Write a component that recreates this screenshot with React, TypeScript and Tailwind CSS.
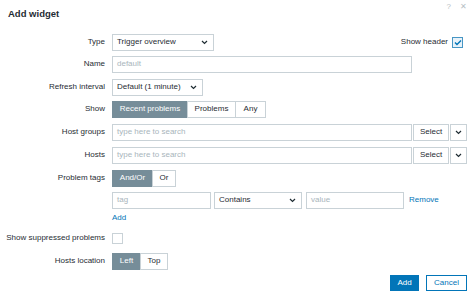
import React from "react";

const Chevron = () => (
  <svg width="7" height="5" viewBox="0 0 7 5" className="shrink-0">
    <polyline points="1,1 3.5,3.5 6,1" fill="none" stroke="#1f2c33" strokeWidth="1.2" />
  </svg>
);

function Select({ value, width }: { value: string; width: string }) {
  return (
    <div className={`${width} h-[17px] border border-[#c9d2d7] bg-white flex items-center justify-between pl-[4px] pr-[5px]`}>
      <span>{value}</span>
      <Chevron />
    </div>
  );
}

function Input({ placeholder, width }: { placeholder: string; width: string }) {
  return (
    <div className={`${width} h-[17px] border border-[#c9d2d7] bg-white flex items-center pl-[4px] text-[#a9b5bc]`}>
      {placeholder}
    </div>
  );
}

function Segmented({ items }: { items: { label: string; w: string; active?: boolean }[] }) {
  return (
    <div className="flex h-[17px]">
      {items.map((it, i) => (
        <div
          key={i}
          className={`${it.w} h-full flex items-center justify-center border ${
            it.active ? "bg-[#768d99] border-[#768d99] text-white" : "bg-white border-[#c9d2d7] -ml-px"
          }`}
        >
          {it.label}
        </div>
      ))}
    </div>
  );
}

function Row({ label, children, className = "" }: { label: string; children?: React.ReactNode; className?: string }) {
  return (
    <div className={`flex items-center ${className}`}>
      <div className="w-[105px] text-right shrink-0">{label}</div>
      <div className="ml-[7px] flex items-center flex-1">{children}</div>
    </div>
  );
}

function MultiSelect() {
  return (
    <>
      <Input placeholder="type here to search" width="w-[300px]" />
      <div className="ml-px w-[36px] h-[17px] border border-[#c9d2d7] flex items-center justify-center">Select</div>
      <div className="ml-px w-[17px] h-[17px] border border-[#c9d2d7] flex items-center justify-center">
        <Chevron />
      </div>
    </>
  );
}

export default function App() {
  return (
    <div
      className="w-[474px] h-[297px] bg-white text-[#1f2c33] text-[8px] leading-none relative overflow-hidden"
      style={{ fontFamily: '"Liberation Sans", Arial, sans-serif' }}
    >
      <div className="flex items-start justify-between pl-[8px] pr-[7px]">
        <div className="pt-[9px] text-[9.5px] font-bold text-[#1f2c33]">Add widget</div>
        <div className="flex gap-[9px] pt-[3px] text-[8px] text-[#b7c0c5]">
          <span>?</span>
          <span>✕</span>
        </div>
      </div>

      <div className="flex flex-col pr-[8px] mt-[15px]">
        <Row label="Type">
          <Select value="Trigger overview" width="w-[102px]" />
          <div className="ml-auto flex items-center gap-[4px] mr-[3px]">
            <span>Show header</span>
            <div className="w-[11px] h-[11px] border border-[#4796c4] bg-[#e8f2f9] flex items-center justify-center">
              <svg width="8" height="7" viewBox="0 0 8 7">
                <polyline points="1,3.5 3,5.5 7,1.5" fill="none" stroke="#0275b8" strokeWidth="1.4" />
              </svg>
            </div>
          </div>
        </Row>
        <Row label="Name" className="mt-[5px]">
          <Input placeholder="default" width="w-[300px]" />
        </Row>
        <Row label="Refresh interval" className="mt-[6px]">
          <Select value="Default (1 minute)" width="w-[91px]" />
        </Row>
        <Row label="Show" className="mt-[5px]">
          <Segmented
            items={[
              { label: "Recent problems", w: "w-[76px]", active: true },
              { label: "Problems", w: "w-[49px]" },
              { label: "Any", w: "w-[31px]" },
            ]}
          />
        </Row>
        <Row label="Host groups" className="mt-[6px]">
          <MultiSelect />
        </Row>
        <Row label="Hosts" className="mt-[6px]">
          <MultiSelect />
        </Row>
        <Row label="Problem tags" className="mt-[6px]">
          <Segmented
            items={[
              { label: "And/Or", w: "w-[41px]", active: true },
              { label: "Or", w: "w-[24px]" },
            ]}
          />
        </Row>
        <Row label="" className="mt-[5px]">
          <Input placeholder="tag" width="w-[99px]" />
          <div className="ml-[3px]">
            <Select value="Contains" width="w-[88px]" />
          </div>
          <div className="ml-[4px]">
            <Input placeholder="value" width="w-[98px]" />
          </div>
          <span className="ml-[5px] text-[#0275b8]">Remove</span>
        </Row>
        <Row label="" className="mt-[5px]">
          <span className="text-[#0275b8]">Add</span>
        </Row>
        <Row label="Show suppressed problems" className="mt-[11px]">
          <div className="w-[11px] h-[11px] border border-[#c9d2d7] bg-white" />
        </Row>
        <Row label="Hosts location" className="mt-[9px]">
          <Segmented
            items={[
              { label: "Left", w: "w-[29px]", active: true },
              { label: "Top", w: "w-[28px]" },
            ]}
          />
        </Row>
      </div>

      <div className="flex justify-end gap-[7px] pr-[7px] mt-[5px]">
        <div className="w-[29px] h-[16px] bg-[#0275b8] text-white flex items-center justify-center">Add</div>
        <div className="w-[41px] h-[16px] border border-[#0275b8] text-[#0275b8] flex items-center justify-center">
          Cancel
        </div>
      </div>
    </div>
  );
}
